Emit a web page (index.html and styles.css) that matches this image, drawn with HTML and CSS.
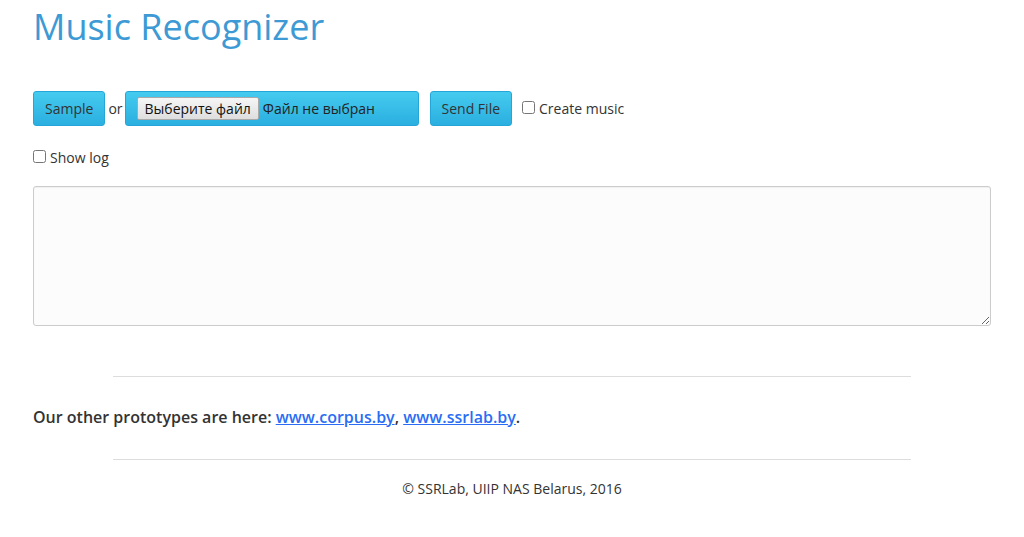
FILE: index.html
```html
<!DOCTYPE html>
<html lang="en">
  <head>
    <meta charset="UTF-8" />
    <meta name="viewport" content="width=device-width, initial-scale=1.0" />
    <title>Music Recognizer</title>
    <link rel="stylesheet" href="styles.css">
  </head>
  <body>
    <div class="page">
      <h1 class="title">Music Recognizer</h1>

      <div class="controls">
        <button class="btn">Sample</button>
        <span class="or">or</span>
        <label class="btn file-btn">
          <span class="file-choose">Выберите файл</span>
          <span class="file-name">Файл не выбран</span>
        </label>
        <button class="btn send">Send File</button>
        <label class="check"><input type="checkbox"> Create music</label>
      </div>

      <div class="log-row">
        <label class="check"><input type="checkbox"> Show log</label>
      </div>

      <textarea class="log"></textarea>

      <hr class="sep first">
      <p class="other">Our other prototypes are here: <a href="#">www.corpus.by</a>, <a href="#">www.ssrlab.by</a>.</p>
      <hr class="sep">
      <p class="footer">© SSRLab, UIIP NAS Belarus, 2016</p>
    </div>
  </body>
</html>
```

FILE: styles.css
```css
body
{
    margin: 0;
    font-family: "Open Sans", "Liberation Sans", sans-serif;
    font-size: 14px;
    color: #333;
    background: #fff;
}
.page
{
    padding: 0 33px;
}
.title
{
    margin: 0;
    padding-top: 6px;
    font-size: 36px;
    font-weight: 400;
    line-height: 42px;
    color: #3d9ad4;
}
.controls
{
    display: flex;
    align-items: center;
    margin-top: 43px;
    height: 35px;
}
.btn
{
    box-sizing: border-box;
    height: 35px;
    padding: 0 11px;
    border: 1px solid #24a6d8;
    border-radius: 3px;
    background: linear-gradient(#45cbef, #2aafe0);
    color: #333;
    font-family: "Open Sans", "Liberation Sans", sans-serif;
    font-size: 14px;
    cursor: pointer;
}
.or
{
    margin: 0 2px 0 3px;
}
.file-btn
{
    display: flex;
    align-items: center;
    width: 294px;
    padding: 0 11px;
    margin-right: 11px;
}
.file-choose
{
    box-sizing: border-box;
    height: 23px;
    line-height: 21px;
    padding: 0 7px;
    border: 1px solid #a9a9a9;
    border-radius: 2px;
    background: linear-gradient(#f6f6f6, #dedede);
    font-family: "Open Sans", "Liberation Sans", sans-serif;
    font-size: 14px;
    color: #111;
}
.file-name
{
    margin-left: 4px;
    font-family: "Open Sans", "Liberation Sans", sans-serif;
    font-size: 14px;
    color: #222;
}
.send
{
    padding: 0 11px;
}
.check
{
    display: flex;
    align-items: center;
    margin-left: 10px;
    color: #333;
}
.check input
{
    width: 13px;
    height: 13px;
    margin: 0 4px 2px 0;
}
.log-row
{
    display: flex;
    margin-top: 20px;
    height: 22px;
}
.log-row .check
{
    margin-left: 0;
}
.log
{
    display: block;
    box-sizing: border-box;
    width: 958px;
    height: 140px;
    margin-top: 18px;
    border: 1px solid #ccc;
    border-radius: 3px;
    background: #fcfcfc;
    box-shadow: inset 0 1px 1px rgba(0, 0, 0, 0.05);
}
.sep
{
    width: 798px;
    margin: 31px auto 0;
    border: 0;
    border-top: 1px solid #ddd;
}
.sep.first
{
    margin-top: 50px;
}
.other
{
    margin: 29px 0 0;
    font-size: 16px;
    font-weight: 600;
    color: #333;
}
.other a
{
    color: #2a6df4;
}
.footer
{
    margin: 19px 0 0;
    text-align: center;
    font-size: 14px;
}
```
